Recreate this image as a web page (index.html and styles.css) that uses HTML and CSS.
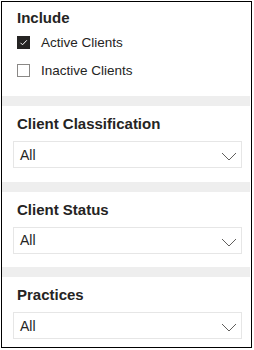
FILE: index.html
```html
<!DOCTYPE html>
<html lang="en">
<head>
    <meta charset="UTF-8">
    <meta name="viewport" content="width=device-width, initial-scale=1.0">
    <title>Filters</title>
    <link rel="stylesheet" href="styles.css">
</head>
<body>
    <div class="panel">

        <!-- Include -->
        <div class="section section-first">
            <div class="section-title">Include</div>
            <label class="check-row">
                <span class="check checked">
                    <svg width="11" height="11" viewBox="0 0 11 11"><path d="M2.5 5.8 L4.5 7.8 L8.8 3.3" fill="none" stroke="#fff" stroke-width="1"/></svg>
                </span>
                Active Clients
            </label>
            <label class="check-row">
                <span class="check"></span>
                Inactive Clients
            </label>
        </div>

        <div class="divider"></div>

        <!-- Client Classification -->
        <div class="section">
            <div class="section-title">Client Classification</div>
            <div class="dropdown">
                <span>All</span>
                <svg class="chevron" width="16" height="9" viewBox="0 0 16 9"><path d="M1 1 L8 8 L15 1" fill="none" stroke="#605e5c" stroke-width="1"/></svg>
            </div>
        </div>

        <div class="divider"></div>

        <!-- Client Status -->
        <div class="section">
            <div class="section-title">Client Status</div>
            <div class="dropdown">
                <span>All</span>
                <svg class="chevron" width="16" height="9" viewBox="0 0 16 9"><path d="M1 1 L8 8 L15 1" fill="none" stroke="#605e5c" stroke-width="1"/></svg>
            </div>
        </div>

        <div class="divider"></div>

        <!-- Practices -->
        <div class="section">
            <div class="section-title">Practices</div>
            <div class="dropdown">
                <span>All</span>
                <svg class="chevron" width="16" height="9" viewBox="0 0 16 9"><path d="M1 1 L8 8 L15 1" fill="none" stroke="#605e5c" stroke-width="1"/></svg>
            </div>
        </div>

    </div>
</body>
</html>
```

FILE: styles.css
```css
body {
    margin: 0;
    background-color: #fff;
    font-family: "Liberation Sans", Arial, sans-serif;
    color: #252423;
}

.panel {
    margin: 1px 0 0 1px;
    width: 249px;
    height: 345px;
    border: 1px solid #000;
    overflow: hidden;
}

.section {
    padding: 8px 9px 13.5px 11px;
}

.section-first {
    padding: 6px 9px 11.5px 11px;
}

.section-title {
    font-size: 15px;
    font-weight: bold;
    line-height: 20px;
    padding-left: 4px;
    margin-bottom: 7px;
}

.section-first .section-title {
    margin-bottom: 0.5px;
}

.divider {
    height: 10px;
    margin-right: 1px;
    background-color: #eeeeee;
}

.check-row {
    display: flex;
    align-items: center;
    height: 28px;
    padding-left: 4px;
    font-size: 13.5px;
    cursor: pointer;
}

.check {
    width: 11px;
    height: 11px;
    border: 1px solid #8a8886;
    margin-right: 11px;
    display: flex;
    align-items: center;
    justify-content: center;
}

.check.checked {
    background-color: #252423;
    border-color: #252423;
}

.dropdown {
    height: 25px;
    border: 1px solid #e6e6e6;
    display: flex;
    align-items: center;
    justify-content: space-between;
    padding: 0 4px 0 6px;
    font-size: 14px;
}

.chevron {
    margin-top: 4px;
}
```
